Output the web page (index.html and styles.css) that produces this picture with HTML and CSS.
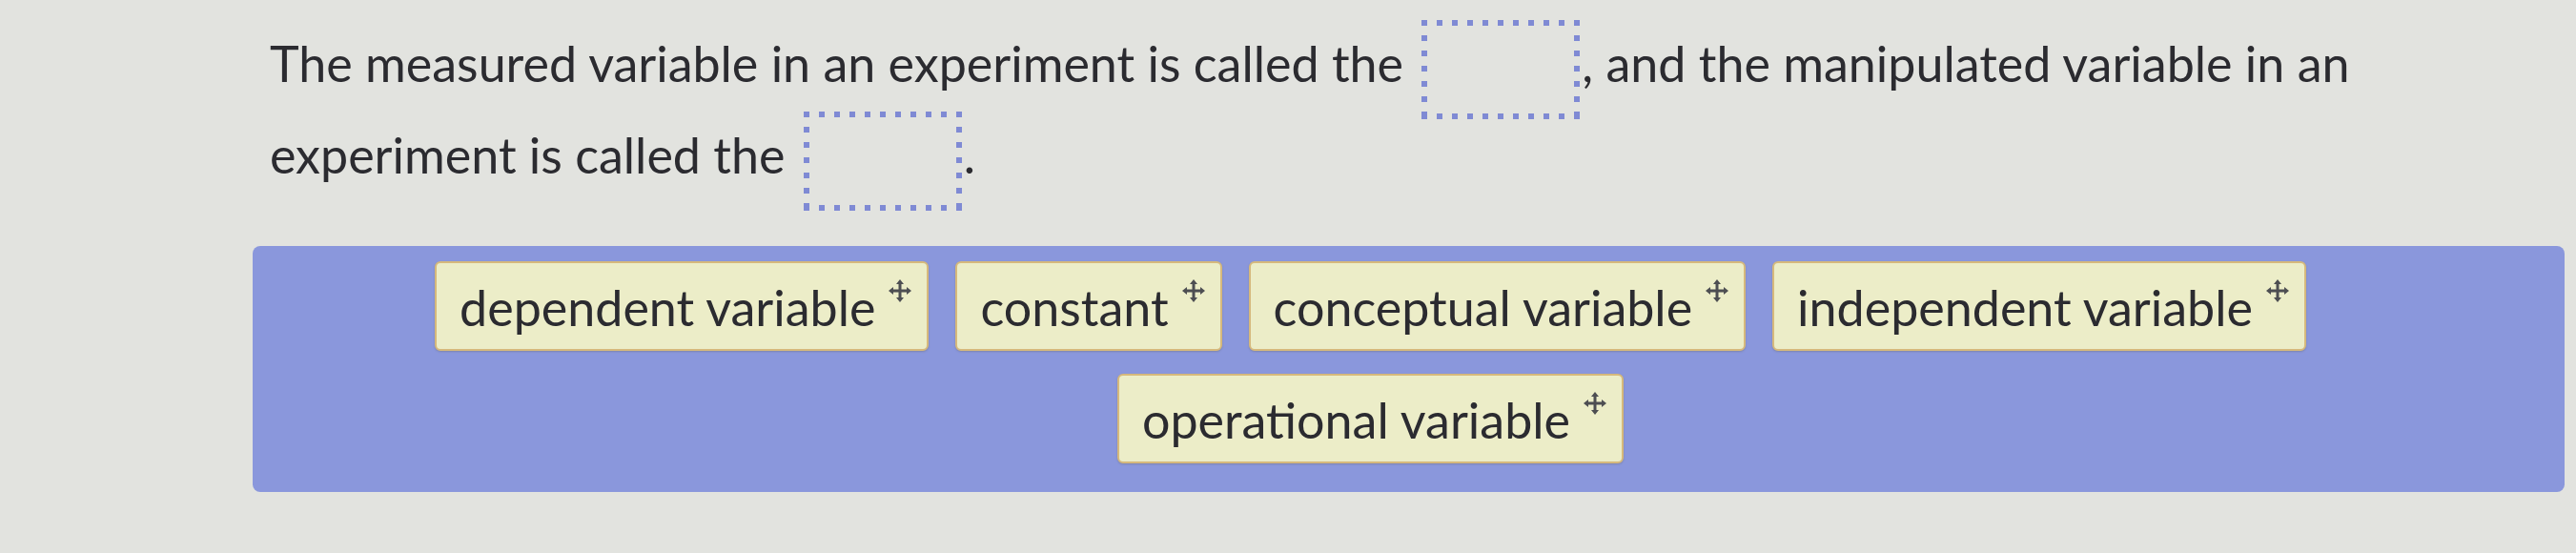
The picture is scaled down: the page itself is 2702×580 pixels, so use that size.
FILE: index.html
```html
<!DOCTYPE html>
<html lang="en">
<head>
    <meta charset="UTF-8">
    <title>Fill in the blanks</title>
    <link rel="stylesheet" href="styles.css">
</head>
<body>
    <div class="question">
        <p class="prompt">
            The measured variable in an experiment is called the <span class="blank"></span>, and the manipulated variable in an<br>
            experiment is called the <span class="blank"></span>.
        </p>

        <!-- answer bank: drag a term into a blank -->
        <div class="bank">
            <div class="term"><span>dependent variable</span><svg class="move" viewBox="0 0 24 24"><path d="M12 4v16M4 12h16"/><path class="tip" d="M12 0l-4 5h8zM12 24l-4-5h8zM0 12l5-4v8zM24 12l-5-4v8z"/></svg></div>
            <div class="term"><span>constant</span><svg class="move" viewBox="0 0 24 24"><path d="M12 4v16M4 12h16"/><path class="tip" d="M12 0l-4 5h8zM12 24l-4-5h8zM0 12l5-4v8zM24 12l-5-4v8z"/></svg></div>
            <div class="term"><span>conceptual variable</span><svg class="move" viewBox="0 0 24 24"><path d="M12 4v16M4 12h16"/><path class="tip" d="M12 0l-4 5h8zM12 24l-4-5h8zM0 12l5-4v8zM24 12l-5-4v8z"/></svg></div>
            <div class="term"><span>independent variable</span><svg class="move" viewBox="0 0 24 24"><path d="M12 4v16M4 12h16"/><path class="tip" d="M12 0l-4 5h8zM12 24l-4-5h8zM0 12l5-4v8zM24 12l-5-4v8z"/></svg></div>
            <div class="term"><span>operational variable</span><svg class="move" viewBox="0 0 24 24"><path d="M12 4v16M4 12h16"/><path class="tip" d="M12 0l-4 5h8zM12 24l-4-5h8zM0 12l5-4v8zM24 12l-5-4v8z"/></svg></div>
        </div>
    </div>
</body>
</html>
```

FILE: styles.css
```css
body {
    margin: 0;
    background-color: #e2e3df;
    font-family: 'Lato', 'Open Sans', sans-serif;
    color: #2b2b30;
}
.question {
    padding: 18px 12px 0 265px;
}
.prompt {
    margin: 0;
    padding-left: 18px;
    width: 2230px;
    font-size: 52px;
    line-height: 96px;
}
/* dotted drop target, square dots */
.blank {
    display: inline-block;
    width: 166px;
    height: 104px;
    vertical-align: middle;
    margin: -12px 2px -12px 6px;
    background:
        repeating-linear-gradient(90deg, #7f8ad4 0 6px, transparent 6px 16px) top left / 100% 6px no-repeat,
        repeating-linear-gradient(90deg, #7f8ad4 0 6px, transparent 6px 16px) bottom left / 100% 6px no-repeat,
        repeating-linear-gradient(180deg, #7f8ad4 0 6px, transparent 6px 16px) top left / 6px 100% no-repeat,
        repeating-linear-gradient(180deg, #7f8ad4 0 6px, transparent 6px 16px) top right / 6px 100% no-repeat;
}
.bank {
    margin-top: 48px;
    width: 2425px;
    box-sizing: border-box;
    height: 258px;
    padding: 16px 190px 0 110px;
    background-color: #8a97dc;
    border-radius: 8px;
    display: flex;
    flex-wrap: wrap;
    justify-content: center;
    align-content: flex-start;
    gap: 24px 28px;
}
.term {
    display: flex;
    align-items: flex-start;
    height: 94px;
    box-sizing: border-box;
    padding: 15px 16px 0 24px;
    background-color: #ecedc8;
    border: 2px solid #d6b97c;
    border-radius: 6px;
    font-size: 52px;
    line-height: 62px;
    box-shadow: 0 1px 2px rgba(90, 80, 40, 0.25);
}
.move {
    width: 24px;
    height: 24px;
    margin: 2px 0 0 14px;
}
.move path {
    stroke: #4d4e52;
    stroke-width: 3;
    fill: none;
}
.move .tip {
    stroke: none;
    fill: #4d4e52;
}
```
